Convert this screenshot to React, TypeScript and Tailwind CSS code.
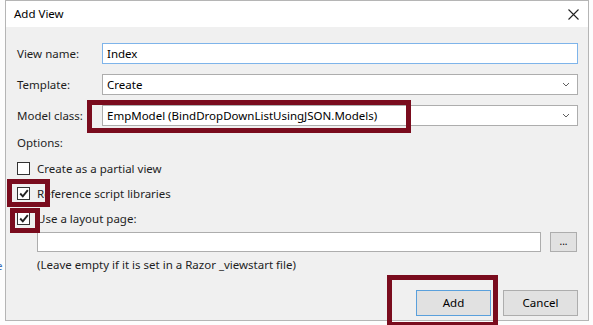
import React from 'react';

const font = { fontFamily: '"Segoe UI", "Noto Sans", sans-serif' };

function Chevron() {
  return (
    <svg width="8" height="5" viewBox="0 0 8 5" className="text-[#606060]">
      <path d="M1 1 L4 4 L7 1" fill="none" stroke="currentColor" strokeWidth="1" />
    </svg>
  );
}

function Check({ checked }: { checked?: boolean }) {
  return (
    <div className="w-[13px] h-[13px] border border-[#333] bg-white flex items-center justify-center shrink-0">
      {checked && (
        <svg width="10" height="9" viewBox="0 0 10 9">
          <path d="M1.2 4.5 L3.8 7.3 L8.8 1.2" fill="none" stroke="#222" strokeWidth="1.9" />
        </svg>
      )}
    </div>
  );
}

function Field({ label, value, focused, select }: { label: string; value: string; focused?: boolean; select?: boolean }) {
  return (
    <div className="flex items-center h-[21px]">
      <div className="w-[85px] text-[#1e1e1e]">{label}</div>
      <div
        className={`flex-1 h-[21px] bg-white border flex items-center pl-[4px] pr-[7px] text-black ${
          focused ? 'border-[#7eb4ea]' : 'border-[#adadad]'
        }`}
      >
        <span className="flex-1">{value}</span>
        {select && <Chevron />}
      </div>
    </div>
  );
}

export default function App() {
  return (
    <div className="w-[593px] h-[325px] bg-[#fdfdfd] relative overflow-hidden text-[11.5px]" style={font}>
      <div className="absolute left-0 top-[257px] text-[#3b6fb6] -ml-[4px]">e</div>
      <div className="ml-[5px] w-[584px] h-[321px] border border-[#b5b5b5] bg-[#f0f0f0] flex flex-col">
        {/* title bar */}
        <div className="h-[26px] bg-white flex items-center pl-[8px] pr-[9px]">
          <span className="flex-1 text-black">Add View</span>
          <svg width="11" height="11" viewBox="0 0 11 11">
            <path d="M0.5 0.5 L10.5 10.5 M10.5 0.5 L0.5 10.5" stroke="#222" strokeWidth="1.1" />
          </svg>
        </div>

        {/* body */}
        <div className="flex-1 pl-[11px] pr-[10px] pt-[16px] flex flex-col">
          <div className="flex flex-col gap-[10px]">
            <Field label="View name:" value="Index" focused />
            <Field label="Template:" value="Create" select />
            <Field label="Model class:" value="EmpModel (BindDropDownListUsingJSON.Models)" select />
          </div>

          <div className="text-[#1e1e1e] mt-[8px] leading-[18px]">Options:</div>

          <div className="flex flex-col mt-[9px] text-[#1e1e1e]">
            <div className="flex items-center gap-[7px] h-[15px]">
              <Check />
              <span>Create as a partial view</span>
            </div>
            <div className="flex items-center gap-[7px] h-[15px] mt-[10px]">
              <Check checked />
              <span>Reference script libraries</span>
            </div>
            <div className="flex items-center gap-[7px] h-[15px] mt-[10px]">
              <Check checked />
              <span>Use a layout page:</span>
            </div>
          </div>

          <div className="flex items-center mt-[6px] pl-[20px]">
            <div className="w-[504px] h-[20px] bg-white border border-[#adadad]" />
            <div className="ml-[9px] w-[27px] h-[20px] bg-[#e1e1e1] border border-[#adadad] flex items-center justify-center text-[10px] leading-none pb-[3px]">
              ...
            </div>
          </div>

          <div className="pl-[20px] mt-[4px] text-[#1e1e1e] leading-[18px]">
            (Leave empty if it is set in a Razor _viewstart file)
          </div>

          <div className="flex justify-end gap-[12px] mt-auto mb-[4px]">
            <div className="w-[75px] h-[26px] bg-[#e1e1e1] border border-[#5aa0dc] flex items-center justify-center text-black">
              Add
            </div>
            <div className="w-[75px] h-[26px] bg-[#e1e1e1] border border-[#adadad] flex items-center justify-center text-black">
              Cancel
            </div>
          </div>
        </div>
      </div>

      {/* annotation boxes */}
      <div className="absolute left-[87px] top-[100px] w-[324px] h-[33px] border-[5px] border-[#7a0c1e]" />
      <div className="absolute left-[7px] top-[179px] w-[43px] h-[28px] border-[5px] border-[#7a0c1e]" />
      <div className="absolute left-[10px] top-[208px] w-[30px] h-[25px] border-[5px] border-[#7a0c1e]" />
      <div className="absolute left-[387px] top-[275px] w-[111px] h-[52px] border-[5px] border-[#7a0c1e]" />
    </div>
  );
}
